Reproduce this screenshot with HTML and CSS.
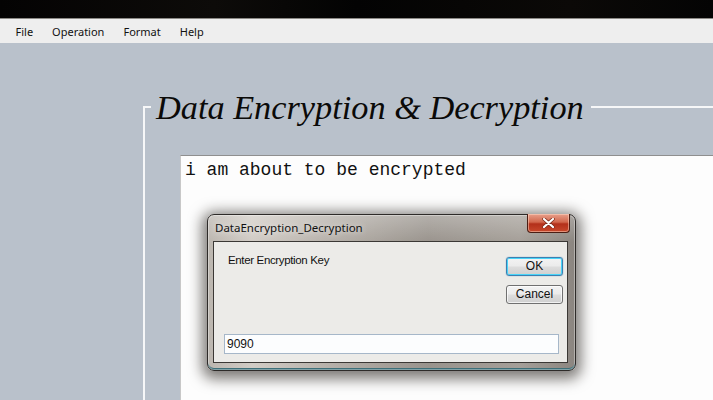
FILE: index.html
```html
<!DOCTYPE html>
<html>
<head>
<meta charset="utf-8">
<link rel="stylesheet" href="styles.css">
</head>
<body>
<div class="os-top"></div>
<nav class="menubar">
  <span class="menu-item">File</span>
  <span class="menu-item">Operation</span>
  <span class="menu-item">Format</span>
  <span class="menu-item">Help</span>
</nav>
<fieldset class="group">
  <legend class="group-title">Data Encryption &amp; Decryption</legend>
  <div class="editor">i am about to be encrypted</div>
</fieldset>

<div class="dialog">
  <div class="dialog-title">DataEncryption_Decryption</div>
  <div class="close-btn">
    <svg width="13" height="10" viewBox="0 0 13 10"><path d="M2 1 L11 9 M11 1 L2 9" stroke="#7a2a1a" stroke-width="3.6" stroke-linecap="round"/><path d="M2 1 L11 9 M11 1 L2 9" stroke="#ffffff" stroke-width="2.2" stroke-linecap="round"/></svg>
  </div>
  <div class="dialog-client">
    <div class="dialog-row">
      <div class="dialog-label">Enter Encryption Key</div>
      <div class="dialog-buttons">
        <div class="btn btn-default">OK</div>
        <div class="btn">Cancel</div>
      </div>
    </div>
    <div class="dialog-input">9090</div>
  </div>
</div>
</body>
</html>
```
FILE: styles.css
```css
html, body {
  margin: 0;
  padding: 0;
}
body {
  width: 713px;
  height: 400px;
  overflow: hidden;
  background: #b9c1cb;
  position: relative;
  font-family: "Noto Sans", "Liberation Sans", sans-serif;
}
.os-top {
  height: 18px;
  background: linear-gradient(90deg, #040303 0%, #0d0b09 30%, #030303 50%, #0b0907 80%, #040404 100%);
  border-bottom: 1px solid #8c8a86;
}
.menubar {
  height: 24px;
  background: #eeeeee;
  display: flex;
  align-items: center;
  padding-left: 6px;
  font-size: 11px;
  color: #111;
}
.menu-item {
  padding: 0 9.5px;
}
.group {
  margin: 44px 0 0 143px;
  padding: 0 0 0 6px;
  border: none;
  border-top: 2px solid #f6f7f8;
  border-left: 2px solid #f6f7f8;
  min-width: 0;
}
.group-title {
  font-family: "Liberation Serif", serif;
  font-style: italic;
  font-size: 34.3px;
  line-height: 40px;
  padding: 0 7px 0 5px;
  color: #0b0a08;
}
.editor {
  margin: 28px 0 0 29px;
  background: #fdfdfd;
  border-top: 1px solid #8f8f8f;
  border-left: 1px solid #c8c8c8;
  height: 242px;
  padding: 3px 0 0 4px;
  font-family: "Liberation Mono", monospace;
  font-size: 18px;
  line-height: 22px;
  color: #111;
}

/* dialog overlay */
.dialog {
  position: absolute;
  left: 207px;
  top: 214px;
  width: 369px;
  height: 157px;
  border: 1px solid #2e2b29;
  border-radius: 7px;
  background:
    linear-gradient(180deg, rgba(255,255,255,0.3) 0px, rgba(255,255,255,0.05) 27px),
    linear-gradient(90deg, #b8b2ab 0%, #cfc9c2 12%, #b0aaa3 35%, #948e87 60%, #a09a93 85%, #857f79 100%);
  box-shadow: 0 3px 14px 5px rgba(20,15,10,0.55), inset 0 0 0 1px rgba(255,255,255,0.35), inset 0 -2px 0 #3d6f78;
  display: flex;
  flex-direction: column;
  padding: 0 7px 7px 5px;
  box-sizing: border-box;
}
.dialog-title {
  height: 26px;
  line-height: 26px;
  font-size: 11.5px;
  color: #111;
  padding-left: 2px;
  text-shadow: 0 0 6px rgba(255,255,255,0.8);
}
.close-btn {
  position: absolute;
  left: 319px;
  top: -1px;
  width: 43px;
  height: 19px;
  box-sizing: border-box;
  border: 1px solid #4a1e14;
  border-top: none;
  border-radius: 0 0 4px 4px;
  background: linear-gradient(180deg, #e8a08c 0%, #d2674c 45%, #b3301a 55%, #c8482c 100%);
  box-shadow: inset 0 0 0 1px rgba(255,220,200,0.5);
  display: flex;
  align-items: center;
  justify-content: center;
}
.dialog-client {
  flex: 1;
  border: 1px solid #3b3835;
  background: #ecebe8;
  display: flex;
  flex-direction: column;
  padding: 12px 4px 8px 10px;
  font-family: "Liberation Sans", Arial, sans-serif;
  font-size: 11px;
  color: #111;
}
.dialog-row {
  display: flex;
  justify-content: space-between;
}
.dialog-label {
  padding: 0 0 0 4px;
  line-height: 13px;
  font-size: 11.5px;
  letter-spacing: -0.35px;
}
.dialog-buttons {
  display: flex;
  flex-direction: column;
  gap: 9px;
  padding-top: 3px;
}
.btn {
  width: 57px;
  height: 19px;
  box-sizing: border-box;
  border: 1px solid #707070;
  border-radius: 3px;
  background: linear-gradient(180deg, #f3f3f3 0%, #ebebeb 48%, #dddddd 52%, #cfcfcf 100%);
  box-shadow: inset 0 0 0 1px rgba(255,255,255,0.7);
  text-align: center;
  line-height: 17px;
  font-size: 12px;
}
.btn-default {
  border-color: #3c7fb1;
  box-shadow: inset 0 0 0 1px #48d4f8, 0 0 1px #3c7fb1;
}
.dialog-input {
  margin-top: auto;
  margin-right: 4px;
  height: 20px;
  box-sizing: border-box;
  border: 1px solid #a6b7c9;
  background: #fcfdfe;
  padding-left: 2px;
  line-height: 18px;
  font-size: 12px;
}
```
